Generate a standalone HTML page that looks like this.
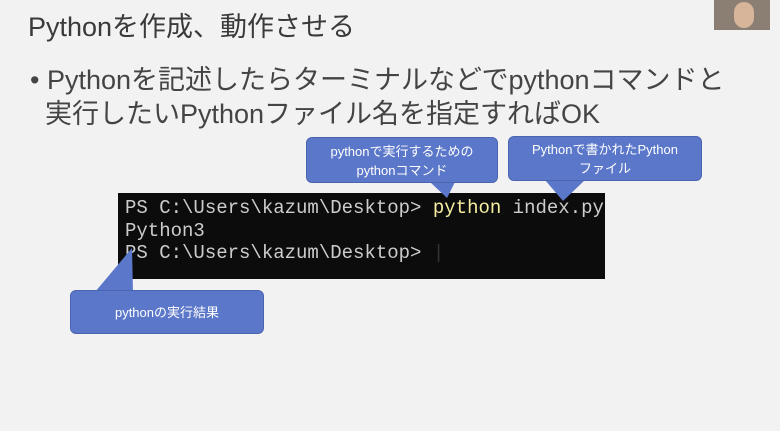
<!DOCTYPE html>
<html><head><meta charset="utf-8"><style>
body{margin:0;width:780px;height:431px;background:#f2f2f2;position:relative;overflow:hidden;font-family:"Liberation Sans","Noto Sans CJK JP",sans-serif;color:#404040}
.t{position:absolute;white-space:nowrap}
.term{position:absolute;left:118px;top:193px;width:487px;height:86px;background:#0c0c0c;font-family:"Liberation Mono","DejaVu Sans Mono",monospace;font-size:19px;color:#cccccc;line-height:22.5px;padding:4px 0 0 7px;box-sizing:border-box;white-space:nowrap;overflow:hidden}
.co{position:absolute;background:#5b77c9;border:1px solid #4a64b0;border-radius:6px;color:#fff;font-size:13px;text-align:center;line-height:19px;box-sizing:border-box}
</style></head><body>
<div class="t" style="left:28px;top:5px;font-size:27px;color:#3a3a3a">Pythonを作成、動作させる</div>
<div style="position:absolute;left:714px;top:0;width:56px;height:30px;background:#8a7f72"></div>
<div style="position:absolute;left:734px;top:2px;width:20px;height:26px;border-radius:10px;background:#d6b59a"></div>
<div class="t" style="left:30px;top:58px;font-size:27px;color:#444">• Pythonを記述したらターミナルなどでpythonコマンドと</div>
<div class="t" style="left:45px;top:92px;font-size:27px;color:#444">実行したいPythonファイル名を指定すればOK</div>
<div class="term">PS C:\Users\kazum\Desktop&gt; <span style="color:#f5eea0">python</span> index.py<br>Python3<br>PS C:\Users\kazum\Desktop&gt; <span style="color:#333">|</span></div>
<svg style="position:absolute;left:0;top:0" width="780" height="431">
<polygon points="430,182 455,182 447,198" fill="#5b77c9"/>
<polygon points="545,180 585,180 563,201" fill="#5b77c9"/>
<polygon points="95,292 133,292 132,248" fill="#5b77c9"/>
</svg>
<div class="co" style="left:306px;top:137px;width:192px;height:46px;padding-top:4px">pythonで実行するための<br>pythonコマンド</div>
<div class="co" style="left:508px;top:136px;width:194px;height:45px;padding-top:3px">Pythonで書かれたPython<br>ファイル</div>
<div class="co" style="left:70px;top:290px;width:194px;height:44px;line-height:44px">pythonの実行結果</div>
</body></html>
